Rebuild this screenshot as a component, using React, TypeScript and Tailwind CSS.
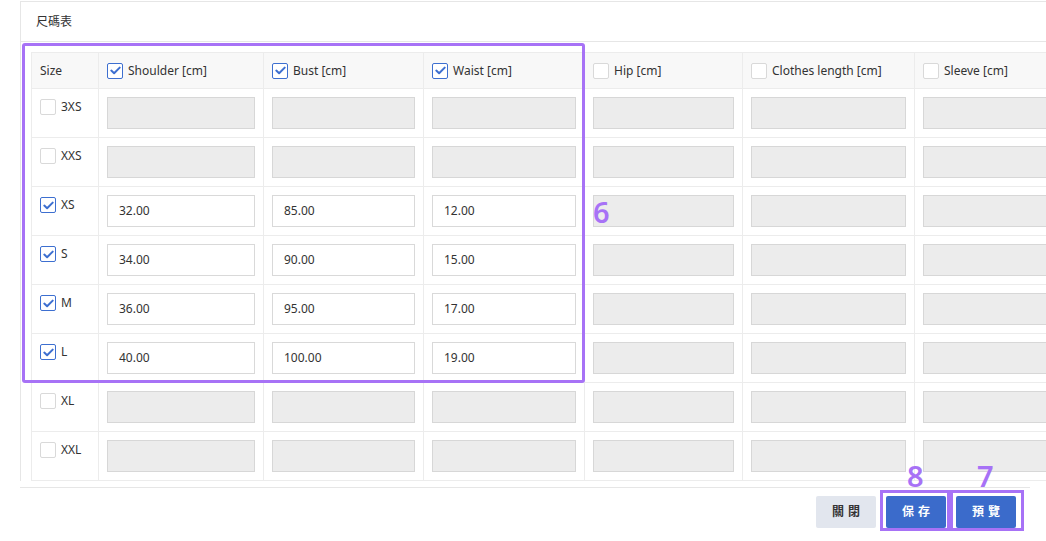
import React from "react";

const PURPLE = "#a772f6";

type Col = { key: string; label: string; width: string; checked: boolean };

const cols: Col[] = [
  { key: "shoulder", label: "Shoulder [cm]", width: "w-[165px]", checked: true },
  { key: "bust", label: "Bust [cm]", width: "w-[160px]", checked: true },
  { key: "waist", label: "Waist [cm]", width: "w-[161px]", checked: true },
  { key: "hip", label: "Hip [cm]", width: "w-[158px]", checked: false },
  { key: "clothes", label: "Clothes length [cm]", width: "w-[172px]", checked: false },
  { key: "sleeve", label: "Sleeve [cm]", width: "w-[170px]", checked: false },
];

const rows: { size: string; checked: boolean; values?: string[] }[] = [
  { size: "3XS", checked: false },
  { size: "XXS", checked: false },
  { size: "XS", checked: true, values: ["32.00", "85.00", "12.00"] },
  { size: "S", checked: true, values: ["34.00", "90.00", "15.00"] },
  { size: "M", checked: true, values: ["36.00", "95.00", "17.00"] },
  { size: "L", checked: true, values: ["40.00", "100.00", "19.00"] },
  { size: "XL", checked: false },
  { size: "XXL", checked: false },
];

function Check({ checked }: { checked: boolean }) {
  return checked ? (
    <span className="flex h-[16px] w-[16px] shrink-0 items-center justify-center rounded-[2px] border border-[#3d6fd0] bg-white">
      <svg width="11" height="9" viewBox="0 0 11 9">
        <path d="M1.3 4.6 L4.1 7.2 L9.7 1.6" fill="none" stroke="#3d6fd0" strokeWidth="2" strokeLinecap="round" strokeLinejoin="round" />
      </svg>
    </span>
  ) : (
    <span className="block h-[16px] w-[16px] shrink-0 rounded-[2px] border border-[#d9d9d9] bg-white" />
  );
}

export default function App() {
  return (
    <div
      className="relative h-[541px] w-[1046px] overflow-hidden bg-white text-[12px] text-[#333]"
      style={{ fontFamily: '"Noto Sans", "Noto Sans CJK TC", sans-serif' }}
    >
      {/* panel */}
      <div className="ml-[20px] mt-px w-[1100px] border-l border-t border-[#e6e6e6]">
        <div className="flex h-[40px] items-center border-b border-[#e6e6e6] pl-[15px] text-[12px]">
          尺碼表
        </div>
        <div className="pl-[10px] pt-[10px]">
          <div className="w-fit border-l border-t border-[#ececec]">
            {/* header */}
            <div className="flex bg-[#f8f8f8]">
              <div className="flex h-[36px] w-[67px] items-center border-b border-r border-[#ececec] pl-[8px]">
                Size
              </div>
              {cols.map((c) => (
                <div
                  key={c.key}
                  className={`flex h-[36px] ${c.width} items-center gap-[5px] border-b border-r border-[#ececec] pl-[8px]`}
                >
                  <Check checked={c.checked} />
                  <span>{c.label}</span>
                </div>
              ))}
            </div>
            {rows.map((r) => (
              <div key={r.size} className="flex bg-white">
                <div className="h-[49px] w-[67px] border-b border-r border-[#ececec] pl-[8px] pt-[10px]">
                  <div className="flex items-center gap-[5px]">
                    <Check checked={r.checked} />
                    <span className="leading-[16px]">{r.size}</span>
                  </div>
                </div>
                {cols.map((c, i) => {
                  const v = r.values && i < 3 ? r.values[i] : undefined;
                  return (
                    <div
                      key={c.key}
                      className={`h-[49px] ${c.width} border-b border-r border-[#ececec] px-[8px] pt-[8px]`}
                    >
                      {v !== undefined ? (
                        <div className="flex h-[32px] w-full items-center border border-[#d9d9d9] bg-white pl-[11px] text-[12px] text-[#333]">
                          {v}
                        </div>
                      ) : (
                        <div className="h-[32px] w-full border border-[#d7d7d7] bg-[#ececec]" />
                      )}
                    </div>
                  );
                })}
              </div>
            ))}
          </div>
        </div>
      </div>

      {/* footer */}
      <div className="ml-[20px] mt-[6px] flex w-[1010px] justify-end gap-[10px] border-t border-[#e6e6e6] pr-[14px] pt-[8px]">
        <button className="flex h-[32px] w-[60px] items-center justify-center rounded-[2px] bg-[#e2e6ee] text-[12px] font-bold tracking-[4px] text-[#333]">
          <span className="pl-[4px]">關閉</span>
        </button>
        <button className="flex h-[32px] w-[60px] items-center justify-center rounded-[2px] bg-[#3b6bcb] text-[12px] font-bold tracking-[4px] text-white">
          <span className="pl-[4px]">保存</span>
        </button>
        <button className="flex h-[32px] w-[60px] items-center justify-center rounded-[2px] bg-[#3b6bcb] text-[12px] font-bold tracking-[4px] text-white">
          <span className="pl-[4px]">預覽</span>
        </button>
      </div>

      {/* annotations */}
      <div
        className="pointer-events-none absolute left-[22px] top-[43px] h-[340px] w-[563px] rounded-[3px] border-[3px]"
        style={{ borderColor: PURPLE }}
      />
      <div
        className="absolute left-[593px] top-[197px] text-[29px] font-semibold leading-none"
        style={{ color: PURPLE }}
      >
        6
      </div>
      <div
        className="pointer-events-none absolute left-[880px] top-[490px] h-[41px] w-[70px] border-[3px]"
        style={{ borderColor: PURPLE }}
      />
      <div
        className="pointer-events-none absolute left-[950px] top-[490px] h-[41px] w-[74px] border-[3px]"
        style={{ borderColor: PURPLE }}
      />
      <div
        className="absolute left-[907px] top-[461px] text-[29px] font-semibold leading-none"
        style={{ color: PURPLE }}
      >
        8
      </div>
      <div
        className="absolute left-[977px] top-[461px] text-[29px] font-semibold leading-none"
        style={{ color: PURPLE }}
      >
        7
      </div>
    </div>
  );
}
